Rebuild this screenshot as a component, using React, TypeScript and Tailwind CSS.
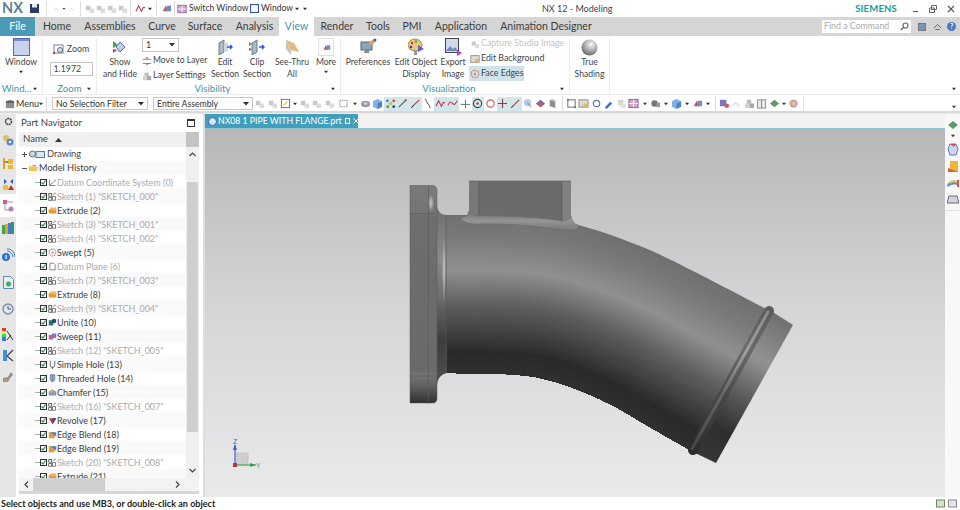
import React from "react";

type P = [number, number];
const font = { fontFamily: 'Lato,"Noto Sans",sans-serif' };

/* ---------- small icon drawing ---------- */
function Ic({ k, s = 12 }: { k: string; s?: number }) {
  const shapes: Record<string, React.ReactNode> = {
    gray: <><rect x="2" y="3" width="5" height="5" fill="#c9c9c9" /><rect x="6" y="6" width="5" height="5" fill="#dcdcdc" /></>,
    grayd: <><rect x="2" y="2" width="8" height="8" fill="#9a9a9a" /><rect x="4" y="5" width="5" height="5" fill="#c8c8c8" /></>,
    redbox: <><rect x="1.5" y="1.5" width="9" height="9" fill="#fff" stroke="#c9443f" /><path d="M4 8L8 4" stroke="#d99a3d" /></>,
    dash: <rect x="2" y="2.5" width="8" height="7" fill="none" stroke="#777" strokeDasharray="1.5 1" />,
    oval: <><ellipse cx="6" cy="6.5" rx="5" ry="3.5" fill="#9a9aa8" /><ellipse cx="6" cy="6" rx="2" ry="1.5" fill="#d0d0da" /></>,
    cube: <><path d="M6 1l5 2.5v6L6 12 1 9.500v-6z" fill="#7fb1e4" /><path d="M6 6l5-2.500v6L6 12z" fill="#4c85c8" /></>,
    dots: <><circle cx="6" cy="6" r="2" fill="#d4c23a" /><circle cx="2.500" cy="3" r="1.500" fill="#4a7fc4" /><circle cx="9.500" cy="3" r="1.500" fill="#cf4a4a" /><circle cx="3" cy="9.500" r="1.500" fill="#4aa050" /><circle cx="9.500" cy="9.500" r="1.500" fill="#444" /></>,
    line: <><path d="M2 10L10 2" stroke="#555" strokeWidth="1.100" /><circle cx="9.500" cy="2.500" r="1.200" fill="#c93c3c" /></>,
    line2: <><path d="M2 10L10 2" stroke="#b04040" strokeWidth="1.300" /><path d="M1 11l3-3" stroke="#444" /></>,
    sq: <path d="M3 1c3 2 2 5 4 6s1 3 2 4" fill="none" stroke="#666" strokeWidth="1.100" />,
    zig: <path d="M1 9l3-6 3 6 2-4h2" fill="none" stroke="#b8404c" strokeWidth="1.200" />,
    wave: <path d="M1 8c2-5 3-4 5-2s3 1 5-3" fill="none" stroke="#b8404c" strokeWidth="1.200" />,
    perp: <path d="M6 2v9M1 7h10" stroke="#666" fill="none" />,
    target: <><circle cx="6" cy="6" r="4.500" fill="none" stroke="#444" strokeWidth="1.200" /><circle cx="6" cy="6" r="1.300" fill="#b33" /></>,
    ring: <circle cx="6" cy="6" r="4" fill="none" stroke="#d05a4a" strokeWidth="1.200" />,
    plus: <path d="M6 1v10M1 6h10" stroke="#a33" strokeWidth="1.200" />,
    blue: <><circle cx="6" cy="5" r="4" fill="#b5cbe8" /><path d="M6 5l4 5" stroke="#777" /></>,
    dia: <><path d="M6 2l5 4-5 4-5-4z" fill="#7a66b8" /><path d="M1 6l5 4 5-4" fill="#c9566a" /></>,
    mono: <><path d="M3 2l6 2v7l-6-2z" fill="#8d8d99" /><path d="M3 2l3-1 4 2-1 1z" fill="#c0c0c8" /></>,
    frame: <><rect x="2" y="2" width="8" height="8" fill="none" stroke="#6d6da0" strokeWidth="1.100" /><circle cx="2" cy="2" r="1.100" fill="#c04848" /><circle cx="10" cy="10" r="1.100" fill="#c04848" /></>,
    img: <><rect x="1" y="2" width="10" height="8" fill="#e0dccb" stroke="#888" /><rect x="6" y="6" width="5" height="4" fill="#e0b86a" /></>,
    cyc: <circle cx="6" cy="6" r="3.500" fill="none" stroke="#5474a8" strokeWidth="1.300" />,
    pen: <path d="M2 10l6-6 2 2-6 6z" fill="#3d73c4" />,
    gbox: <><rect x="2" y="2" width="6" height="6" fill="#d5d5d5" /><rect x="5" y="6" width="6" height="5" fill="#e3e3e3" /></>,
    win: <><rect x="1" y="1.500" width="10" height="9" fill="#d3a7c6" stroke="#7a5fa8" /><path d="M6 2v8M1 6h10" stroke="#fff" /></>,
    gear: <><circle cx="5" cy="6" r="3.500" fill="#777" /><rect x="7" y="5" width="4" height="5" fill="#999" /></>,
    wave2: <><path d="M2 9l3-6 3 6z" fill="#c9544a" /><path d="M6 3h5v6H6z" fill="#6e8cc8" /></>,
    pur: <><rect x="1" y="2" width="7" height="7" fill="#8273bf" /><circle cx="8.500" cy="8.500" r="2.500" fill="#d95a5a" /></>,
    faint: <path d="M2 9l3-4 4 4" fill="none" stroke="#d8d8d8" strokeWidth="1.200" />,
    gcube: <><rect x="3" y="2" width="5" height="5" fill="#bcbcbc" /><rect x="1" y="6" width="5" height="5" fill="#d2d2d2" /><rect x="6" y="6" width="5" height="5" fill="#a8a8a8" /></>,
    book: <><rect x="1.500" y="2" width="9" height="9" fill="#e8e8e8" stroke="#888" /><path d="M6 2v9" stroke="#888" /></>,
    green: <path d="M6 2l5 4-5 4-5-4z" fill="#5f9b6a" />,
    orange: <><circle cx="6" cy="6" r="4.500" fill="#dba090" /><circle cx="6" cy="6" r="2" fill="#c9c9c9" /></>,
    sketch: <><rect x="1" y="2" width="4" height="3.500" fill="none" stroke="#444" /><rect x="1" y="7.500" width="4" height="3.500" fill="none" stroke="#444" /><path d="M6 11V6h4v5zM7 4l3-3" fill="none" stroke="#555" /><path d="M9 1l2 2" stroke="#d19a2e" /></>,
    datum: <><path d="M2 10V2M2 10h8M2 10l6-5" stroke="#666" fill="none" /><path d="M8 1l3 3-2 1z" fill="#c87858" /></>,
    layer: <><path d="M1 4h10M1 9h10" stroke="#777" /><path d="M6 1l2 2H4zM6 11L4 9h4z" fill="#c9544a" /></>,
    extrude: <><rect x="1" y="4" width="10" height="6" fill="#e8952e" /><rect x="3" y="2" width="8" height="4" fill="#f2b35a" /></>,
    swept: <><circle cx="6" cy="6" r="4.500" fill="none" stroke="#e07860" strokeWidth="1.500" strokeDasharray="2 1" /><circle cx="6" cy="6" r="1.500" fill="#999" /></>,
    plane: <path d="M2.500 1.500h5l2 2v7h-7z" fill="#fff" stroke="#666" />,
    unite: <><rect x="1" y="3" width="6" height="7" fill="#1f7a7a" /><circle cx="8" cy="4" r="3" fill="#2d4f60" /></>,
    sweep: <><rect x="1" y="4" width="6" height="6" fill="#d05a8e" /><rect x="5" y="2" width="6" height="6" fill="#8079c9" /></>,
    hole: <path d="M3 1v6a3 3 0 0 0 6 0V1M6 9v3" fill="none" stroke="#555" strokeWidth="1.100" />,
    thread: <><path d="M3 1v6a3 3 0 0 0 6 0V1z" fill="#9db4d8" stroke="#5a70a0" /><path d="M6 1v9" stroke="#5a70a0" /></>,
    chamfer: <><path d="M1 5l5-3 5 3v5H1z" fill="#7a97d0" /><path d="M1 5l5-3 3 2-4 3z" fill="#e4a35c" /></>,
    revolve: <><path d="M1 3h10l-5 8z" fill="#d8402c" /><path d="M6 3h5l-5 8z" fill="#2c4a88" /></>,
    blend: <><rect x="1" y="3" width="8" height="8" fill="#e49a3a" /><path d="M3 3h8v6z" fill="#4f7fd4" /></>,
  };
  return <svg width={s} height={s} viewBox="0 0 12 12" className="shrink-0">{shapes[k]}</svg>;
}

const Caret = ({ c = "" }: { c?: string }) => (
  <svg width="6" height="4" viewBox="0 0 6 4" className={`shrink-0 ${c}`}><path d="M0 0h6L3 3.500z" fill="#333" /></svg>
);
const VSep = () => <div className="w-px h-[15px] bg-[#dcdcdc] shrink-0" />;

/* ---------- toolbar ---------- */
const qIcons: [string, string][] = [
  ["gray", "w-[11px]"], ["gray", "w-[14px]"], ["redbox", "w-[12px]"], ["^", "w-[7px]"], ["gray", "w-[12px]"], ["gray", "w-[12px]"],
  ["gray", "w-[15px]"], ["dash", "w-[13px]"], ["^", "w-[9px]"], ["oval", "w-[12px]"], ["cube", "w-[13px]"],
  ["*dots", "w-[12.500px]"], ["*line", "w-[12.500px]"], ["*line2", "w-[12.500px]"], ["sq", "w-[12.500px]"], ["*zig", "w-[12.500px]"], ["*wave", "w-[12.500px]"],
  ["perp", "w-[12.500px]"], ["*target", "w-[12.500px]"], ["ring", "w-[12.500px]"], ["*plus", "w-[12.500px]"], ["*line2", "w-[12.500px]"], ["blue", "w-[12.500px]"], ["dia", "w-[12.500px]"], ["mono", "w-[12.500px]"],
  ["|", "w-[6px]"], ["frame", "w-[12.500px]"], ["img", "w-[12.500px]"], ["cyc", "w-[12.500px]"], ["pen", "w-[12.500px]"], ["gbox", "w-[12.500px]"], ["win", "w-[12.500px]"],
  ["^", "w-[9px]"], ["gear", "w-[12px]"], ["^", "w-[9px]"], ["cube", "w-[12px]"], ["^", "w-[9px]"], ["wave2", "w-[12px]"], ["^", "w-[9px]"],
  ["|", "w-[6px]"], ["pur", "w-[12.500px]"], ["faint", "w-[12.500px]"], ["gcube", "w-[12.500px]"], ["book", "w-[12.500px]"], ["green", "w-[12px]"], ["^", "w-[7px]"], ["orange", "w-[13px]"],
];

function Toolbar() {
  return (
    <div className="h-[19px] shrink-0 flex items-center bg-white border-b-2 border-[#d9d9d9] border-t border-t-[#ececec] pt-[1px] relative">
      <div className="w-[5px] shrink-0" />
      <svg width="10" height="10" viewBox="0 0 12 12" className="shrink-0"><rect x="1" y="5" width="10" height="6" fill="#8a8f96" /><path d="M1 3c3-2 7-2 10 0v2H1z" fill="#5a6068" /></svg>
      <span className="text-[9px] ml-[1px] w-[22px] text-[#333] leading-none shrink-0">Menu</span>
      <Caret c="scale-75" />
      <div className="w-[2px] shrink-0" /><VSep /><div className="w-[5px] shrink-0" />
      <div className="w-[96px] shrink-0 h-[13px] border border-[#c8c8c8] flex items-center justify-between px-[3px] text-[8.700px] text-[#333] whitespace-nowrap">No Selection Filter<Caret /></div>
      <div className="w-[5px] shrink-0" />
      <div className="w-[100px] shrink-0 h-[13px] border border-[#c8c8c8] flex items-center justify-between px-[3px] text-[8.700px] text-[#333] whitespace-nowrap">Entire Assembly<Caret /></div>
      <div className="w-[1px] shrink-0" />
      {qIcons.map(([k, w], i) => (
        <div key={i} className={`${w} h-[14px] flex items-center justify-center shrink-0 ${k[0] === "*" ? "bg-[#d3e6ec]" : ""}`}>
          {k === "^" ? <Caret c="scale-75" /> : k === "|" ? <VSep /> : <Ic k={k.replace("*", "")} s={11} />}
        </div>
      ))}
      <div className="h-[15px] w-px bg-[#e4e4e4] ml-[3px]" />
      <div className="flex-1" />
      <Caret c="mr-[3px] mt-[6px] scale-75" />
    </div>
  );
}

/* ---------- ribbon ---------- */
const Big = ({ w, label, children, caret }: { w: string; label: React.ReactNode; children: React.ReactNode; caret?: boolean }) => (
  <div className={`${w} shrink-0 flex flex-col items-center`}>
    <div className="h-[18px] flex items-center justify-center">{children}</div>
    <div className="text-[8.600px] leading-[12px] text-[#444] text-center whitespace-nowrap">{label}</div>
    {caret && <Caret c="scale-75 mt-[2px]" />}
  </div>
);

const GroupLabel = ({ children, w }: { children: React.ReactNode; w?: boolean }) => (
  <div className="h-[11px] relative flex items-center justify-center text-[9.600px] text-[#3f93ad] leading-none whitespace-nowrap">
    {children}
    {w && <Caret c="absolute right-[4px] top-[4px] scale-75" />}
  </div>
);

function Ribbon() {
  return (
    <div className="h-[58px] shrink-0 flex bg-white pt-[2px]">
      <div className="w-[43px] shrink-0 flex flex-col border-r border-[#ececec]">
        <div className="h-[46px] flex justify-center">
          <Big w="w-[42px]" label="Window" caret>
            <svg width="17" height="18" viewBox="0 0 17 18"><rect x="0.500" y="0.500" width="16" height="17" fill="#c8d2ee" stroke="#5866b4" /><rect x="1" y="1" width="15" height="2" fill="#7f8ac8" /></svg>
          </Big>
        </div>
        <GroupLabel w><span className="pr-[9px]">Wind...</span></GroupLabel>
      </div>

      <div className="w-[54px] shrink-0 flex flex-col border-r border-[#ececec]">
        <div className="h-[46px] flex flex-col items-center pl-[3px] pt-[3px]">
          <div className="flex items-center gap-[2px] h-[16px] text-[8.800px] text-[#444]">
            <svg width="12" height="12" viewBox="0 0 12 12"><rect x="1" y="2" width="9" height="8" fill="none" stroke="#7c7ca0" /><circle cx="1" cy="10" r="1.200" fill="#c33" /><circle cx="7" cy="7" r="2.500" fill="#cfe0f0" stroke="#667" /></svg>
            Zoom
          </div>
          <div className="w-[43px] h-[14px] mt-[5px] border border-[#c4c4c4] text-[8.800px] leading-[12px] text-[#444] pl-[3px]">1.1972</div>
        </div>
        <GroupLabel w>Zoom</GroupLabel>
      </div>

      <div className="w-[244px] shrink-0 flex flex-col border-r border-[#ececec]">
        <div className="h-[46px] flex">
          <Big w="w-[46px]" label={<>Show<br />and Hide</>}>
            <svg width="16" height="14" viewBox="0 0 16 14"><path d="M8 2l5 5-5 5-4-5z" fill="#bcd0ee" stroke="#5c6cae" /><path d="M1 1l5 4-5 3z" fill="#4aa050" /><path d="M1 9l4 1-4 3z" fill="#c43c3c" /></svg>
          </Big>
          <div className="w-[66px] shrink-0 flex flex-col">
            <div className="ml-[-1px] w-[37px] h-[14px] border border-[#c4c4c4] flex items-center justify-between px-[3px] text-[8.800px] text-[#333]">1<Caret /></div>
            <div className="flex items-center h-[15px] mt-[1px] ml-[-1px] gap-[1px] text-[8.600px] text-[#444] whitespace-nowrap"><Ic k="layer" s={10} />Move to Layer</div>
            <div className="flex items-center h-[15px] ml-[-1px] gap-[1px] text-[8.600px] text-[#444] whitespace-nowrap"><Ic k="gcube" s={10} />Layer Settings</div>
          </div>
          <Big w="w-[32px]" label={<>Edit<br />Section</>}>
            <svg width="15" height="16" viewBox="0 0 15 16"><path d="M1 4l5-3v12l-5 3z" fill="#a9b9c8" stroke="#6c7c8c" /><path d="M6 3l4 1v8l-4 1z" fill="#cfd6de" /><path d="M9 8h5M12 6l2 2-2 2" stroke="#2e5ed4" fill="none" strokeWidth="1.500" /></svg>
          </Big>
          <Big w="w-[32px]" label={<>Clip<br />Section</>}>
            <svg width="16" height="16" viewBox="0 0 16 16"><path d="M3 4l5-3v12l-5 3z" fill="#a9b9c8" stroke="#6c7c8c" /><path d="M10 8h5M13 6l2 2-2 2" stroke="#2e5ed4" fill="none" strokeWidth="1.500" /><path d="M0 3l3 2-3 2z" fill="#4aa050" /><path d="M0 9l3 1-3 2z" fill="#c43c3c" /></svg>
          </Big>
          <Big w="w-[38px]" label={<>See-Thru<br />All</>}>
            <svg width="15" height="17" viewBox="0 0 15 17"><path d="M1 1l8 3 5 9-8-2z" fill="#e3b983" /><path d="M1 1v9l5 6v-5z" fill="#c9c4be" /></svg>
          </Big>
          <div className="w-[30px] shrink-0 flex flex-col items-center">
            <div className="w-[16px] h-[18px] border border-[#e0e0e0] flex items-center justify-center"><Ic k="wave2" s={9} /></div>
            <div className="text-[8.600px] leading-[12px] text-[#444]">More</div>
            <Caret c="scale-75 mt-[2px]" />
          </div>
        </div>
        <GroupLabel w><span className="pr-[12px]">Visibility</span></GroupLabel>
      </div>

      <div className="w-[229px] shrink-0 flex flex-col border-r border-[#ececec]">
        <div className="h-[46px] flex">
          <Big w="w-[54px]" label="Preferences">
            <svg width="17" height="18" viewBox="0 0 17 18"><rect x="1" y="4" width="11" height="8" fill="#88a8b8" stroke="#567" /><path d="M5 12h4v3H4z" fill="#7a8a9a" /><path d="M8 5l6-4 2 2-5 5z" fill="#d4a468" /><circle cx="15" cy="2" r="1.500" fill="#2e5ed4" /></svg>
          </Big>
          <Big w="w-[42px]" label={<>Edit Object<br />Display</>}>
            <svg width="17" height="18" viewBox="0 0 17 18"><ellipse cx="7" cy="7" rx="7" ry="6" fill="#eac77c" stroke="#b08840" /><circle cx="4" cy="5" r="1.200" fill="#c33" /><circle cx="8" cy="3.500" r="1.200" fill="#4a4" /><circle cx="3" cy="9" r="1.200" fill="#33b" /><path d="M10 7l6 4-6 3z" fill="#6d5cc4" /><path d="M6 12h3v5H6z" fill="#999" /></svg>
          </Big>
          <Big w="w-[32px]" label={<>Export<br />Image</>}>
            <svg width="17" height="18" viewBox="0 0 17 18"><rect x="0.500" y="0.500" width="13" height="14" fill="#cddbf2" stroke="#445" /><path d="M1 13l4-5 3 3 2-2 3 4z" fill="#7488bc" /><circle cx="9" cy="5" r="1.500" fill="#f3d28a" /><path d="M12 12l5 3-5 3z" fill="#b93eb9" /></svg>
          </Big>
          <div className="flex flex-col flex-1 text-[8.800px] leading-none whitespace-nowrap">
            <div className="h-[15px] flex items-center gap-[1px] pl-[1px] text-[#c3c3c3] mt-[-2px]"><Ic k="gray" s={10} />Capture Studio Image</div>
            <div className="h-[15px] flex items-center gap-[1px] pl-[1px] text-[#444]"><Ic k="img" s={10} />Edit Background</div>
            <div className="h-[15px] w-[55px] flex items-center gap-[1px] pl-[1px] text-[#444] bg-[#cfe4ea]"><Ic k="swept" s={10} />Face Edges</div>
          </div>
        </div>
        <GroupLabel w><span className="pr-[12px]">Visualization</span></GroupLabel>
      </div>

      <div className="w-[40px] shrink-0 flex flex-col border-r border-[#ececec]">
        <div className="h-[46px] flex justify-center">
          <Big w="w-[40px]" label={<>True<br />Shading</>}>
            <svg width="17" height="17" viewBox="0 0 17 17"><defs><radialGradient id="ts" cx="0.600" cy="0.300" r="0.700"><stop offset="0" stopColor="#fafafa" /><stop offset="0.600" stopColor="#a8a8a8" /><stop offset="1" stopColor="#6c6c6c" /></radialGradient></defs><circle cx="8.500" cy="8.500" r="8" fill="url(#ts)" /></svg>
          </Big>
        </div>
      </div>
      <div className="flex-1 flex items-end justify-end pb-[3px] pr-[3px]"><Caret c="scale-75" /></div>
    </div>
  );
}

/* ---------- title + tabs ---------- */
function TitleBar() {
  return (
    <div className="h-[17px] shrink-0 flex items-center bg-white relative">
      <span className="ml-[2px] w-[24px] text-[14.500px] font-bold leading-none text-[#5f7f93] shrink-0">NX</span>
      <div className="w-[4px] shrink-0" />
      <svg width="9" height="9" viewBox="0 0 9 9" className="shrink-0"><rect width="9" height="9" fill="#2a3c66" /><rect x="2" y="0" width="5" height="3.500" fill="#e4e8f0" /></svg>
      <div className="w-[7px] shrink-0" /><VSep /><div className="w-[5px] shrink-0" />
      <Ic k="faint" s={9} /><Caret c="scale-50" /><Ic k="faint" s={9} />
      <div className="w-[4px] shrink-0" /><VSep /><div className="w-[3px] shrink-0" />
      <Ic k="gray" s={11} /><Ic k="gray" s={11} /><Ic k="gray" s={11} /><Ic k="gray" s={11} />
      <div className="w-[2px] shrink-0" /><VSep /><div className="w-[4px] shrink-0" />
      <Ic k="zig" s={11} /><Caret c="scale-75 ml-[1px]" />
      <div className="w-[3px] shrink-0" /><VSep /><div className="w-[4px] shrink-0" />
      <Ic k="wave2" s={11} />
      <div className="w-[2px] shrink-0" /><VSep /><div className="w-[2px] shrink-0" />
      <Ic k="win" s={10} />
      <span className="text-[8.600px] text-[#333] whitespace-nowrap ml-[2px] w-[59px] shrink-0">Switch Window</span>
      <svg className="ml-[2px] shrink-0" width="9" height="9" viewBox="0 0 9 9"><rect x="0.500" y="0.500" width="8" height="8" fill="#fff" stroke="#3556b8" strokeWidth="1.200" /></svg>
      <span className="text-[8.600px] text-[#333] whitespace-nowrap ml-[2px] w-[32px] shrink-0">Window</span>
      <Caret c="scale-75 ml-[1px]" />
      <Caret c="scale-75 ml-[2px]" />
      <div className="absolute left-[542px] top-[2px] text-[9px] text-[#444] leading-[14px]">NX 12 - Modeling</div>
      <div className="flex-1" />
      <span className="text-[9.500px] font-bold tracking-[0.2px] text-[#0e9e9e] leading-none">SIEMENS</span>
      <div className="w-[16px] shrink-0" />
      <div className="w-[5px] h-px bg-[#555] mt-[6px]" />
      <svg className="ml-[11px]" width="8" height="8" viewBox="0 0 8 8"><path d="M2.500.500h5v4h-5zM.500 3h5v4.500h-5z" fill="#fff" stroke="#666" /></svg>
      <svg className="ml-[10px] mr-[5px]" width="8" height="8" viewBox="0 0 8 8"><path d="M1 1l6 6M7 1L1 7" stroke="#555" strokeWidth="1.100" /></svg>
    </div>
  );
}

function Tabs() {
  const tabs: [string, string][] = [["Home", "w-[42px]"], ["Assemblies", "w-[64px]"], ["Curve", "w-[40px]"], ["Surface", "w-[46px]"], ["Analysis", "w-[53px]"]];
  const rest: [string, string][] = [["Render", "w-[46px]"], ["Tools", "w-[36px]"], ["PMI", "w-[32px]"], ["Application", "w-[66px]"], ["Animation Designer", "w-[104px]"]];
  return (
    <div className="h-[19px] shrink-0 flex items-center bg-[#d5d5d5] text-[10.500px] text-[#3c3c3c] relative">
      <div className="w-[35px] h-full bg-[#4a9ab5] text-white flex items-center justify-center shrink-0">File</div>
      <div className="w-[1px] shrink-0" />
      {tabs.map(([t, w]) => <div key={t} className={`${w} shrink-0 text-center whitespace-nowrap`}>{t}</div>)}
      <div className="w-[35px] h-full bg-white text-[#3f93ad] flex items-center justify-center ml-[-2px] shrink-0">View</div>
      {rest.map(([t, w]) => <div key={t} className={`${w} shrink-0 text-center whitespace-nowrap`}>{t}</div>)}
      <div className="flex-1" />
      <div className="w-[89px] shrink-0 h-[13px] bg-white flex items-center justify-between px-[2px] text-[8.800px] text-[#aaa] leading-none whitespace-nowrap">Find a Command
        <svg width="9" height="9" viewBox="0 0 9 9"><circle cx="5.500" cy="3.500" r="2.500" fill="none" stroke="#666" strokeWidth="1.200" /><path d="M3.500 5.500L1 8" stroke="#666" strokeWidth="1.500" /></svg>
      </div>
      <svg className="ml-[6px]" width="10" height="10" viewBox="0 0 10 10"><rect x="1.500" y="1.500" width="7" height="7" fill="#7b95b5" stroke="#777" /></svg>
      <svg className="ml-[6px]" width="9" height="7" viewBox="0 0 9 7"><path d="M1 5l3.500-3.500L8 5M2.500 6.500h4" stroke="#666" fill="none" /></svg>
      <div className="ml-[5px] mr-[4px] w-[9px] h-[9px] rounded-full bg-[#4a78c8] text-white text-[7px] leading-[9px] text-center font-bold">?</div>
    </div>
  );
}

/* ---------- navigator ---------- */
const rows: [string, string, boolean][] = [
  ["datum", 'Datum Coordinate System (0)', true],
  ["sketch", 'Sketch (1) "SKETCH_000"', true],
  ["extrude", "Extrude (2)", false],
  ["sketch", 'Sketch (3) "SKETCH_001"', true],
  ["sketch", 'Sketch (4) "SKETCH_002"', true],
  ["swept", "Swept (5)", false],
  ["plane", "Datum Plane (6)", true],
  ["sketch", 'Sketch (7) "SKETCH_003"', true],
  ["extrude", "Extrude (8)", false],
  ["sketch", 'Sketch (9) "SKETCH_004"', true],
  ["unite", "Unite (10)", false],
  ["sweep", "Sweep (11)", false],
  ["sketch", 'Sketch (12) "SKETCH_005"', true],
  ["hole", "Simple Hole (13)", false],
  ["thread", "Threaded Hole (14)", false],
  ["chamfer", "Chamfer (15)", false],
  ["sketch", 'Sketch (16) "SKETCH_007"', true],
  ["revolve", "Revolve (17)", false],
  ["blend", "Edge Blend (18)", false],
  ["blend", "Edge Blend (19)", false],
  ["sketch", 'Sketch (20) "SKETCH_008"', true],
  ["extrude", "Extrude (21)", false],
];

const Check = () => (
  <svg width="7" height="7" viewBox="0 0 7 7" className="shrink-0"><rect x="0.500" y="0.500" width="6" height="6" fill="#fff" stroke="#333" /><path d="M1.500 3.500l1.500 1.500 2.500-3.500" fill="none" stroke="#1c9a3c" strokeWidth="1.200" /></svg>
);

function Navigator() {
  return (
    <div className="w-[187px] shrink-0 bg-white flex flex-col pl-[3px] pr-[4px]">
      <div className="h-[18px] shrink-0 flex items-center justify-between pl-[2px] pr-[4px] text-[9.600px] text-[#444]">
        Part Navigator
        <svg width="8" height="8" viewBox="0 0 8 8"><rect x="0.500" y="0.500" width="7" height="7" fill="none" stroke="#333" /><path d="M0 1.500h8" stroke="#333" /></svg>
      </div>
      <div className="flex flex-1 min-h-0 flex-col">
        <div className="flex flex-1 min-h-0">
          <div className="flex-1 min-w-0 flex flex-col overflow-hidden">
            <div className="h-[15px] shrink-0 bg-[#f0f0f0] flex items-center pl-[4px] text-[9.600px] text-[#444]">Name
              <svg className="ml-[7px]" width="7" height="4" viewBox="0 0 7 4"><path d="M3.500 0L7 4H0z" fill="#333" /></svg>
            </div>
            <div className="h-[14px] shrink-0 flex items-center pl-[3px] text-[9.200px] text-[#444] leading-none">
              <span className="w-[5px] h-[5px] relative shrink-0 flex items-center justify-center"><span className="absolute w-[5px] h-px bg-[#555]" /><span className="absolute h-[5px] w-px bg-[#555]" /></span>
              <svg className="ml-[2px]" width="16" height="8" viewBox="0 0 16 8"><circle cx="3.500" cy="4" r="3" fill="#cfd8e6" stroke="#667" /><rect x="7" y="1.500" width="8.500" height="6" fill="#dbe6f4" stroke="#5878b8" /></svg>
              <span className="ml-[2px]">Drawing</span>
            </div>
            <div className="h-[14px] shrink-0 flex items-center pl-[3px] bg-[#fafafa] text-[9.200px] text-[#444] leading-none">
              <span className="w-[5px] h-px bg-[#555] shrink-0" />
              <svg className="ml-[2px]" width="9" height="8" viewBox="0 0 9 8"><path d="M0 2h3l1-1h3v1.500H0z" fill="#cf9a2a" /><path d="M0 3h9l-1.500 4H0z" fill="#f0c648" /></svg>
              <span className="ml-[1px]">Model History</span>
            </div>
            <div className="flex-1 min-h-0 overflow-hidden">
              {rows.map(([k, t, dim], i) => (
                <div key={t} className={`h-[14px] flex items-center pl-[16px] leading-none text-[9px] whitespace-nowrap ${i % 2 ? "bg-[#fafafa]" : "bg-white"}`}>
                  <div className="w-[5px] h-px bg-[#aaa] shrink-0" />
                  <Check />
                  <span className="ml-[1px]"><Ic k={k} s={9} /></span>
                  <span className={dim ? "text-[#ababab]" : "text-[#404040]"}>{t}</span>
                </div>
              ))}
            </div>
          </div>
          <div className="w-[13px] shrink-0 flex flex-col bg-[#f0f0f0]">
            <div className="h-[15px] bg-[#c4c4c4] shrink-0" />
            <div className="h-[35px] flex items-start pt-[5px] justify-center shrink-0">
              <svg width="7" height="5" viewBox="0 0 7 5"><path d="M.5 4l3-3 3 3" fill="none" stroke="#444" strokeWidth="1.200" /></svg>
            </div>
            <div className="h-[250px] bg-[#cfcfcf] shrink-0 w-[11px] ml-[1px]" />
            <div className="flex-1 flex items-end pb-[5px] justify-center">
              <svg width="7" height="5" viewBox="0 0 7 5"><path d="M.5 1l3 3 3-3" fill="none" stroke="#444" strokeWidth="1.200" /></svg>
            </div>
          </div>
        </div>
        <div className="h-[13px] shrink-0 flex items-center bg-[#f3f3f3]">
          <div className="w-[14px] flex justify-center"><svg width="5" height="7" viewBox="0 0 5 7"><path d="M4 .5l-3 3 3 3" fill="none" stroke="#444" strokeWidth="1.200" /></svg></div>
          <div className="w-[72px] h-full bg-[#cfcfcf]" />
          <div className="flex-1 flex justify-end pr-[19px]"><svg width="5" height="7" viewBox="0 0 5 7"><path d="M1 .5l3 3-3 3" fill="none" stroke="#444" strokeWidth="1.200" /></svg></div>
        </div>
        <div className="h-[3px] shrink-0 bg-[#d6d6d6] mb-[3px]" />
      </div>
    </div>
  );
}

/* ---------- rails ---------- */
function LeftRail() {
  const B = ({ h, children, active }: { h: string; children: React.ReactNode; active?: boolean }) => (
    <div className={`${h} flex items-center justify-center w-[16px] shrink-0 ${active ? "bg-white" : ""}`}>{children}</div>
  );
  return (
    <div className="w-[16px] shrink-0 bg-[#e6e6e6] flex flex-col">
      <B h="h-[14px]"><svg width="9" height="9" viewBox="0 0 9 9"><circle cx="4.500" cy="4.500" r="3" fill="none" stroke="#444" strokeWidth="1.500" strokeDasharray="2 .5" /></svg></B>
      <B h="h-[24px]"><svg width="12" height="12" viewBox="0 0 12 12"><circle cx="4" cy="4" r="3" fill="#e4c04c" /><circle cx="8" cy="8" r="3.500" fill="#5a88d0" /><circle cx="8" cy="8" r="1.200" fill="#fff" /></svg></B>
      <B h="h-[22px]"><svg width="12" height="13" viewBox="0 0 12 13"><rect x="1" y="1" width="2" height="11" fill="#d8a02c" /><rect x="3" y="4" width="5" height="2" fill="#888" /><rect x="6" y="2" width="5" height="5" fill="#efb92e" /><rect x="6" y="8" width="5" height="4" fill="#efb92e" /></svg></B>
      <B h="h-[20px]"><svg width="13" height="13" viewBox="0 0 13 13"><path d="M2 1l3 2.500L2 6zM11 1L8 3.500 11 6z" fill="#2a5ecb" /><rect x="1" y="7" width="5" height="5" fill="#e8c22c" /><path d="M6 12l3-5 3 5z" fill="#cb2a2a" /></svg></B>
      <B h="h-[23px]" active><svg width="13" height="13" viewBox="0 0 13 13"><rect x="1" y="1" width="4" height="4" fill="#c060a8" /><path d="M3 5v6h4M5 3h6" stroke="#999" fill="none" /><circle cx="9" cy="10" r="2.500" fill="#b878c8" /></svg></B>
      <B h="h-[21px]"><svg width="13" height="13" viewBox="0 0 13 13"><rect x="0" y="4" width="3" height="9" fill="#3ca84c" /><rect x="3" y="3" width="3" height="10" fill="#e4a41c" /><rect x="6" y="2" width="3" height="11" fill="#3c7cd4" /><rect x="9" y="1" width="3" height="12" fill="#2c9c6c" /></svg></B>
      <B h="h-[33px]"><svg width="13" height="13" viewBox="0 0 13 13"><circle cx="4" cy="9" r="4" fill="#2a72d4" /><rect x="3.500" y="7" width="1.200" height="4" fill="#fff" /><path d="M5 3a6 6 0 0 1 6 6M5 .8a8 8 0 0 1 8 8" stroke="#3a82d4" fill="none" /></svg></B>
      <B h="h-[23px]"><svg width="11" height="13" viewBox="0 0 11 13"><path d="M.5.500h7l3 3v9H.5z" fill="#e4eef8" stroke="#5c8cc4" /><circle cx="5.500" cy="8" r="2.500" fill="#3fae5a" /></svg></B>
      <B h="h-[30px]"><svg width="12" height="12" viewBox="0 0 12 12"><circle cx="6" cy="6" r="5" fill="#dfe6ee" stroke="#7888a0" strokeWidth="1.300" /><path d="M6 3v3h3" stroke="#556" fill="none" /></svg></B>
      <B h="h-[21px]"><svg width="12" height="13" viewBox="0 0 12 13"><rect x="0" y="0" width="4" height="3" fill="#e33" /><rect x="0" y="3" width="4" height="3" fill="#ee3" /><rect x="0" y="6" width="4" height="3" fill="#3d4" /><rect x="0" y="9" width="4" height="4" fill="#37e" /><path d="M5 3l6 9M5 12l4-5" stroke="#333" fill="none" /></svg></B>
      <B h="h-[21px]"><svg width="12" height="13" viewBox="0 0 12 13"><path d="M1 1h4v11H1z" fill="#3e8fe0" /><path d="M5 7l6-6M5 7l6 5" stroke="#445" strokeWidth="1.300" /></svg></B>
      <B h="h-[21px]"><svg width="12" height="12" viewBox="0 0 12 12"><path d="M1 11V7l5-1 3-5 2 3-3 3-2 4z" fill="#8a8f96" /><circle cx="4" cy="9" r="1.500" fill="#d2a04c" /></svg></B>
    </div>
  );
}

function RightRail() {
  return (
    <div className="w-[15px] shrink-0 bg-[#f8f8f8] flex flex-col items-center pt-[4px] gap-0">
      <div className="h-[13px] flex items-center"><Ic k="green" s={12} /></div>
      <Caret c="scale-75 mt-[3px] mb-[3px]" />
      <div className="h-[16px] flex items-center"><svg width="12" height="13" viewBox="0 0 12 13"><path d="M3 1h6l2 5-2 6H3l-2-6z" fill="#c8d6f0" stroke="#5c78c8" /><path d="M3 1h6L7 4z" fill="#d85050" /></svg></div>
      <div className="h-[18px] flex items-center"><svg width="12" height="13" viewBox="0 0 12 13"><rect x="3" y="1" width="8" height="11" fill="#ecb53c" /><path d="M1 12V8l10 4z" fill="#d8603c" /></svg></div>
      <div className="h-[16px] flex items-center"><svg width="12" height="9" viewBox="0 0 12 9"><path d="M0 6c3-5 6-5 10-4v4C6 5 3 6 1 8z" fill="#5c8ccc" /><path d="M2 3c2-2 5-2 8-1v2C7 3 5 3 3 5z" fill="#ecc84c" /><rect x="10" y="1" width="2" height="7" fill="#d85050" /></svg></div>
      <div className="h-[16px] flex items-center"><svg width="12" height="9" viewBox="0 0 12 9"><path d="M2 1h8l2 7H0z" fill="#d0d4dc" stroke="#667" /></svg></div>
      <div className="w-[13px] h-px bg-[#ddd] mt-[3px]" />
    </div>
  );
}

/* ---------- 3d model ---------- */
function smooth(pts: P[], per = 10): P[] {
  const out: P[] = [];
  for (let i = 0; i < pts.length - 1; i++) {
    const a = pts[Math.max(0, i - 1)], b = pts[i], c = pts[i + 1], d = pts[Math.min(pts.length - 1, i + 2)];
    for (let j = 0; j < per; j++) {
      const t = j / per, t2 = t * t, t3 = t2 * t;
      const f = (k: 0 | 1) => 0.5 * (2 * b[k] + (c[k] - a[k]) * t + (2 * a[k] - 5 * b[k] + 4 * c[k] - d[k]) * t2 + (3 * b[k] - a[k] - 3 * c[k] + d[k]) * t3);
      out.push([f(0), f(1)]);
    }
  }
  out.push(pts[pts.length - 1]);
  return out;
}
const stops: [number, number][] = [[0, 0x70], [0.15, 0x7a], [0.35, 0x90], [0.45, 0x7a], [0.56, 0x60], [0.77, 0x3c], [0.87, 0x2a], [1, 0x30]];
function shade(v: number) {
  for (let i = 0; i < stops.length - 1; i++) {
    if (v <= stops[i + 1][0]) {
      const r = (v - stops[i][0]) / (stops[i + 1][0] - stops[i][0]);
      const g = Math.round(stops[i][1] + r * (stops[i + 1][1] - stops[i][1]));
      return `rgb(${g},${g},${g})`;
    }
  }
  return "rgb(48,48,48)";
}
const topEdge = smooth([[444, 215], [520, 216], [578, 225], [640, 246], [693, 271], [768, 310]]);
const botEdge = smooth([[444, 373], [520, 375], [565, 385], [610, 404], [650, 427], [692, 451]]);

function Model() {
  const n = 80;
  const bottom = botEdge.map((p) => `${p[0].toFixed(1)},${p[1].toFixed(1)}`).reverse();
  const strips = Array.from({ length: n }, (_, j) => {
    const v0 = j / n;
    const front = topEdge.map((p, i) => `${(p[0] + (botEdge[i][0] - p[0]) * v0).toFixed(1)},${(p[1] + (botEdge[i][1] - p[1]) * v0).toFixed(1)}`);
    return <polygon key={j} points={[...front, ...bottom].join(" ")} fill={shade(v0 + 0.5 / n)} />;
  });
  return (
    <svg className="w-full h-full block" viewBox="205 129 740 368">
      <defs>
        <linearGradient id="bg" x1="0" y1="0" x2="0" y2="1"><stop offset="0" stopColor="#b7b7b8" /><stop offset="0.5" stopColor="#d5d6d7" /><stop offset="1" stopColor="#eaeaeb" /></linearGradient>
        <linearGradient id="sleeve" gradientUnits="userSpaceOnUse" x1="781" y1="317" x2="704" y2="457">
          <stop offset="0" stopColor="#707070" /><stop offset="0.3" stopColor="#929292" /><stop offset="0.58" stopColor="#555" /><stop offset="0.8" stopColor="#2e2e2e" /><stop offset="1" stopColor="#363636" />
        </linearGradient>
        <linearGradient id="ringg" gradientUnits="userSpaceOnUse" x1="770" y1="310" x2="692" y2="452">
          <stop offset="0" stopColor="#5c5c5c" /><stop offset="0.3" stopColor="#6a6a6a" /><stop offset="0.6" stopColor="#484848" /><stop offset="1" stopColor="#2b2b2b" />
        </linearGradient>
        <linearGradient id="ringh" gradientUnits="userSpaceOnUse" x1="770" y1="310" x2="692" y2="452">
          <stop offset="0" stopColor="#888" /><stop offset="0.3" stopColor="#a0a0a0" /><stop offset="0.6" stopColor="#666" /><stop offset="1" stopColor="#444" />
        </linearGradient>
        <linearGradient id="flange" x1="0" y1="0" x2="0" y2="1">
          <stop offset="0" stopColor="#7a7a7a" /><stop offset="0.13" stopColor="#747474" /><stop offset="0.14" stopColor="#6e6e6e" /><stop offset="0.85" stopColor="#6a6a6a" /><stop offset="0.87" stopColor="#747474" /><stop offset="0.93" stopColor="#5c5c5c" /><stop offset="1" stopColor="#2f2f2f" />
        </linearGradient>
        <linearGradient id="neckv" x1="0" y1="0" x2="0" y2="1">
          <stop offset="0" stopColor="#6e6e6e" /><stop offset="0.3" stopColor="#8a8a8a" /><stop offset="0.5" stopColor="#707070" /><stop offset="0.75" stopColor="#3c3c3c" /><stop offset="1" stopColor="#505050" />
        </linearGradient>
        <linearGradient id="rim" x1="0" y1="0" x2="0" y2="1"><stop offset="0" stopColor="#6e6e6e" /><stop offset="0.5" stopColor="#959595" /><stop offset="1" stopColor="#777" /></linearGradient>
        <radialGradient id="spot" cx="0.500" cy="0.500" r="0.500"><stop offset="0" stopColor="#c8c8c8" /><stop offset="1" stopColor="#c8c8c8" stopOpacity="0" /></radialGradient>
      </defs>
      <rect x="205" y="129" width="740" height="368" fill="url(#bg)" />

      {/* boss */}
      <rect x="469" y="181" width="102" height="46" fill="#6b6b6b" />
      <rect x="469" y="181" width="10" height="36" fill="#787878" />
      <rect x="562" y="181" width="9" height="44" fill="#808080" />
      <path d="M469 181h102M479 181v36M562 181v41" stroke="#555" strokeWidth="0.600" fill="none" />

      {/* pipe */}
      {strips}

      {/* boss fillet */}
      <path d="M460 218c5-1 8-3 9-7 0 3 5 5 10 5 30 0 60 1 83 5 3 0 8-2 9-5 1 5 3 8 7 9l0 4c-6 2-12 2-18 1-28-5-60-7-83-6-7 0-14-2-17-6z" fill="url(#rim)" stroke="#666" strokeWidth="0.500" />

      {/* neck */}
      <path d="M437 205c0 6 4 10 10 10v158c-5 1-9 4-10 12z" fill="url(#neckv)" />
      <path d="M446 215v158" stroke="#555" strokeWidth="0.600" />

      {/* flange */}
      <path d="M410 185.500h23c2 0 4 2 4 5v208c0 3-2 4.500-4 4.500h-23z" fill="url(#flange)" stroke="#5a5a5a" strokeWidth="0.500" />
      <path d="M428.500 185.500v218M410 213.500h26M410 376h26" stroke="#585858" strokeWidth="0.600" fill="none" />
      <ellipse cx="431" cy="203" rx="3" ry="9" fill="url(#spot)" />
      <ellipse cx="444" cy="270" rx="2" ry="34" fill="url(#spot)" />

      {/* end sleeve and ring */}
      <polygon points="768,309 793,325 716,463 691,451" fill="url(#sleeve)" />
      <line x1="769" y1="311" x2="693" y2="450" stroke="url(#ringg)" strokeWidth="10" strokeLinecap="round" />
      <line x1="768" y1="312" x2="692" y2="449" stroke="url(#ringh)" strokeWidth="3" strokeLinecap="round" />

      {/* triad */}
      <rect x="236" y="453" width="12" height="12" fill="#cdcdcd" stroke="#bdbdbd" strokeWidth="0.600" />
      <path d="M235 465v-20" stroke="#3d62d8" strokeWidth="1.200" />
      <path d="M233 450l2-6 2 6z" fill="#3d62d8" />
      <path d="M236 465h20" stroke="#4aa860" strokeWidth="1.200" />
      <path d="M250 463l6 2-6 2z" fill="#3a9a50" />
      <rect x="233" y="463" width="4" height="4" fill="#b8303c" />
      <text x="233" y="444" fontSize="7" fill="#3d62d8" fontFamily="Liberation Sans">Z</text>
      <text x="256" y="468" fontSize="7" fill="#4aa860" fontFamily="Liberation Sans">Y</text>
    </svg>
  );
}

export default function App() {
  return (
    <div className="w-[960px] h-[510px] overflow-hidden flex flex-col bg-white" style={font}>
      <TitleBar />
      <Tabs />
      <Ribbon />
      <Toolbar />
      <div className="flex-1 min-h-0 flex border-t border-[#ececec]">
        <LeftRail />
        <Navigator />
        <div className="w-[2px] shrink-0 bg-[#dedede]" />
        <div className="flex-1 min-w-0 flex flex-col">
          <div className="h-[14px] shrink-0 flex bg-[#f2f2f2]">
            <div className="w-[153px] h-full bg-[#3f9fbc] flex items-center pl-[3px] text-[8.700px] text-white leading-none whitespace-nowrap">
              <svg width="9" height="9" viewBox="0 0 9 9" className="mr-[1px] shrink-0"><circle cx="4.500" cy="4.500" r="4" fill="#d8e6f4" stroke="#3d62a8" /></svg>
              NX08 1 PIPE WITH FLANGE.prt
              <span className="ml-[3px] w-[5px] h-[6px] border border-white inline-block shrink-0" />
              <svg className="ml-[3px] shrink-0" width="6" height="6" viewBox="0 0 6 6"><path d="M.5.5l5 5M5.500.5l-5 5" stroke="#fff" /></svg>
            </div>
          </div>
          <div className="h-[1px] shrink-0 bg-[#8fc0cf]" />
          <div className="flex-1 min-h-0"><Model /></div>
        </div>
        <RightRail />
      </div>
      <div className="h-[13px] shrink-0 bg-white flex items-center pl-[1px] text-[9.050px] font-bold text-[#222] leading-none relative">
        Select objects and use MB3, or double-click an object
        <div className="absolute right-[3px] top-[2px] flex gap-[3px]">
          <svg width="9" height="9" viewBox="0 0 9 9"><rect x="0.500" y="1" width="8" height="7" fill="#d8dfd4" stroke="#6b8a5a" /></svg>
          <svg width="9" height="9" viewBox="0 0 9 9"><rect x="0.500" y="1" width="8" height="7" fill="#e4e4e4" stroke="#888" /></svg>
        </div>
      </div>
    </div>
  );
}
